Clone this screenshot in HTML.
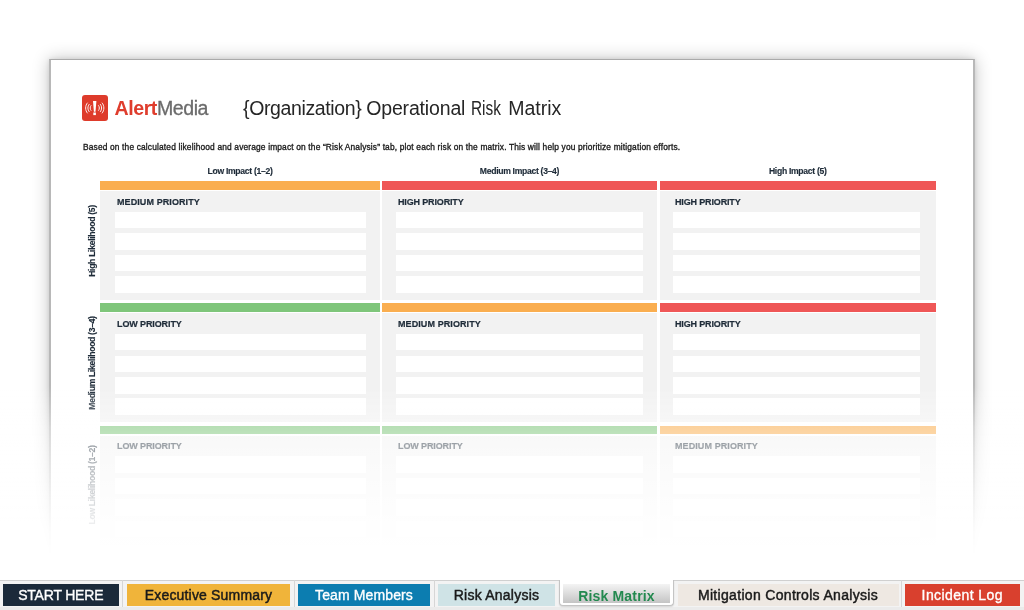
<!DOCTYPE html>
<html><head><meta charset="utf-8">
<style>
html,body{margin:0;padding:0;}
body{-webkit-font-smoothing:antialiased;width:1024px;height:610px;position:relative;overflow:hidden;background:#fff;font-family:"Liberation Sans",sans-serif;}
div{position:absolute;box-sizing:border-box;}
.wrap{left:0;top:0;width:1024px;height:610px;will-change:transform;}
.page{left:49px;top:58.7px;width:926.3px;height:560px;background:#fff;border:2.2px solid #b8b8b8;border-top:1.6px solid #aaa;box-shadow:0 0 5px rgba(0,0,0,0.10), 0 0 16px rgba(0,0,0,0.24);}
.bar{height:8.5px;}
.ttl{top:96px;font-size:19.5px;line-height:24px;white-space:nowrap;color:#262626;}
.gray{background:#F2F2F2;}
.wr{height:16.5px;background:#fff;}
.lbl{font-weight:bold;font-size:9px;line-height:10px;color:#1e2b38;-webkit-text-stroke:0.2px #1e2b38;white-space:nowrap;}
.hdr{font-weight:bold;font-size:8.6px;letter-spacing:-0.3px;line-height:10px;color:#1e2b38;-webkit-text-stroke:0.15px #1e2b38;white-space:nowrap;text-align:center;}
.rl{font-weight:bold;font-size:8.6px;letter-spacing:-0.3px;line-height:10px;color:#1e2b38;-webkit-text-stroke:0.15px #1e2b38;white-space:nowrap;text-align:center;width:120px;transform:rotate(-90deg);transform-origin:center center;}
.fade{left:0;top:380px;width:1024px;height:200px;background:linear-gradient(to bottom, rgba(255,255,255,0) 5px, rgba(255,255,255,0.45) 48px, rgba(255,255,255,0.56) 65px, rgba(255,255,255,0.8) 115px, rgba(255,255,255,0.94) 148px, rgba(255,255,255,1) 178px);}
.tabbar{left:0;top:579.5px;width:1024px;height:31px;background:#f3f3f3;border-top:1.3px solid #d0d0d0;}
.tabbot{left:0;top:607px;width:1024px;height:3px;background:#ebebeb;}
.tab{top:583.5px;height:22.8px;font-size:14px;line-height:22.5px;text-align:center;white-space:nowrap;color:#1a1a1a;-webkit-text-stroke:0.45px currentColor;}
.tw{-webkit-text-stroke:0.35px #fff;}
.sep{top:580px;width:1.4px;height:27px;background:#d6d6d6;}
</style></head><body><div class="wrap">
<div class="page"></div>
<!-- logo -->
<svg style="position:absolute;left:81.8px;top:94.6px" width="26" height="26" viewBox="0 0 26 26"><rect x="0" y="0" width="26" height="26" rx="3" fill="#DE3B2B"/><path d="M11 6.1 L14.4 6.1 L13.5 16.7 L11.9 16.7 Z" fill="#fff"/><rect x="11.3" y="17.5" width="2.6" height="2.6" fill="#fff"/><g fill="none" stroke="#fff" stroke-width="1" opacity="0.92"><path d="M5.6 7.7 C3 10.5 3 15.5 5.6 18.3"/><path d="M7.5 9 C5.4 11.2 5.4 14.8 7.5 17"/><path d="M9.2 10.3 C7.8 11.9 7.8 14.1 9.2 15.7"/><path d="M19.9 7.7 C22.5 10.5 22.5 15.5 19.9 18.3"/><path d="M18 9 C20.1 11.2 20.1 14.8 18 17"/><path d="M16.3 10.3 C17.7 11.9 17.7 14.1 16.3 15.7"/></g></svg>
<div style="left:114.5px;top:97px;font-size:19.6px;line-height:22px;white-space:nowrap;letter-spacing:-0.45px;"><span style="color:#DF3D2D;font-weight:bold">Alert</span><span style="color:#6b6b6b;-webkit-text-stroke:0.3px #6b6b6b">Media</span></div>
<div class="ttl" style="left:243px;letter-spacing:-0.38px;">{Organization}</div><div class="ttl" style="left:366.2px;letter-spacing:-0.16px;">Operational</div><div class="ttl" style="left:471.3px;transform:scaleX(0.79);transform-origin:0 0;">Risk</div><div class="ttl" style="left:508.2px;">Matrix</div>
<div style="left:83px;top:141.8px;font-size:8.4px;line-height:10px;white-space:nowrap;color:#1a1a1a;letter-spacing:0.155px;-webkit-text-stroke:0.32px #1a1a1a;">Based on the calculated likelihood and average impact on the “Risk Analysis” tab, plot each risk on the matrix. This will help you prioritize mitigation efforts.</div>
<div class="hdr" style="left:100px;top:166px;width:280px;">Low Impact (1–2)</div>
<div class="hdr" style="left:382px;top:166px;width:275px;">Medium Impact (3–4)</div>
<div class="hdr" style="left:659.5px;top:166px;width:276.5px;">High Impact (5)</div>
<div class="bar" style="left:100px;top:181px;width:280px;background:#FAAE50"></div>
<div class="gray" style="left:100px;top:191px;width:280px;height:109px"></div>
<div class="lbl" style="left:117px;top:196.8px;letter-spacing:0.09px">MEDIUM PRIORITY</div>
<div class="wr" style="left:114.5px;top:211.6px;width:251.5px"></div>
<div class="wr" style="left:114.5px;top:233.2px;width:251.5px"></div>
<div class="wr" style="left:114.5px;top:254.7px;width:251.5px"></div>
<div class="wr" style="left:114.5px;top:276.1px;width:251.5px"></div>
<div class="bar" style="left:382px;top:181px;width:275px;background:#EF5757"></div>
<div class="gray" style="left:382px;top:191px;width:275px;height:109px"></div>
<div class="lbl" style="left:398px;top:196.8px;letter-spacing:-0.15px">HIGH PRIORITY</div>
<div class="wr" style="left:395.5px;top:211.6px;width:247.5px"></div>
<div class="wr" style="left:395.5px;top:233.2px;width:247.5px"></div>
<div class="wr" style="left:395.5px;top:254.7px;width:247.5px"></div>
<div class="wr" style="left:395.5px;top:276.1px;width:247.5px"></div>
<div class="bar" style="left:659.5px;top:181px;width:276.5px;background:#EF5757"></div>
<div class="gray" style="left:659.5px;top:191px;width:276.5px;height:109px"></div>
<div class="lbl" style="left:675px;top:196.8px;letter-spacing:-0.15px">HIGH PRIORITY</div>
<div class="wr" style="left:672.5px;top:211.6px;width:247.5px"></div>
<div class="wr" style="left:672.5px;top:233.2px;width:247.5px"></div>
<div class="wr" style="left:672.5px;top:254.7px;width:247.5px"></div>
<div class="wr" style="left:672.5px;top:276.1px;width:247.5px"></div>
<div class="bar" style="left:100px;top:303.3px;width:280px;background:#7FC67B"></div>
<div class="gray" style="left:100px;top:313.3px;width:280px;height:109px"></div>
<div class="lbl" style="left:117px;top:319.1px;letter-spacing:-0.11px">LOW PRIORITY</div>
<div class="wr" style="left:114.5px;top:333.90000000000003px;width:251.5px"></div>
<div class="wr" style="left:114.5px;top:355.5px;width:251.5px"></div>
<div class="wr" style="left:114.5px;top:377.0px;width:251.5px"></div>
<div class="wr" style="left:114.5px;top:398.4px;width:251.5px"></div>
<div class="bar" style="left:382px;top:303.3px;width:275px;background:#FAAE50"></div>
<div class="gray" style="left:382px;top:313.3px;width:275px;height:109px"></div>
<div class="lbl" style="left:398px;top:319.1px;letter-spacing:0.09px">MEDIUM PRIORITY</div>
<div class="wr" style="left:395.5px;top:333.90000000000003px;width:247.5px"></div>
<div class="wr" style="left:395.5px;top:355.5px;width:247.5px"></div>
<div class="wr" style="left:395.5px;top:377.0px;width:247.5px"></div>
<div class="wr" style="left:395.5px;top:398.4px;width:247.5px"></div>
<div class="bar" style="left:659.5px;top:303.3px;width:276.5px;background:#EF5757"></div>
<div class="gray" style="left:659.5px;top:313.3px;width:276.5px;height:109px"></div>
<div class="lbl" style="left:675px;top:319.1px;letter-spacing:-0.15px">HIGH PRIORITY</div>
<div class="wr" style="left:672.5px;top:333.90000000000003px;width:247.5px"></div>
<div class="wr" style="left:672.5px;top:355.5px;width:247.5px"></div>
<div class="wr" style="left:672.5px;top:377.0px;width:247.5px"></div>
<div class="wr" style="left:672.5px;top:398.4px;width:247.5px"></div>
<div class="bar" style="left:100px;top:425.6px;width:280px;background:#7FC67B"></div>
<div class="gray" style="left:100px;top:435.6px;width:280px;height:109px"></div>
<div class="lbl" style="left:117px;top:441.40000000000003px;letter-spacing:-0.11px">LOW PRIORITY</div>
<div class="wr" style="left:114.5px;top:456.20000000000005px;width:251.5px"></div>
<div class="wr" style="left:114.5px;top:477.8px;width:251.5px"></div>
<div class="wr" style="left:114.5px;top:499.3px;width:251.5px"></div>
<div class="wr" style="left:114.5px;top:520.7px;width:251.5px"></div>
<div class="bar" style="left:382px;top:425.6px;width:275px;background:#7FC67B"></div>
<div class="gray" style="left:382px;top:435.6px;width:275px;height:109px"></div>
<div class="lbl" style="left:398px;top:441.40000000000003px;letter-spacing:-0.11px">LOW PRIORITY</div>
<div class="wr" style="left:395.5px;top:456.20000000000005px;width:247.5px"></div>
<div class="wr" style="left:395.5px;top:477.8px;width:247.5px"></div>
<div class="wr" style="left:395.5px;top:499.3px;width:247.5px"></div>
<div class="wr" style="left:395.5px;top:520.7px;width:247.5px"></div>
<div class="bar" style="left:659.5px;top:425.6px;width:276.5px;background:#FAAE50"></div>
<div class="gray" style="left:659.5px;top:435.6px;width:276.5px;height:109px"></div>
<div class="lbl" style="left:675px;top:441.40000000000003px;letter-spacing:0.09px">MEDIUM PRIORITY</div>
<div class="wr" style="left:672.5px;top:456.20000000000005px;width:247.5px"></div>
<div class="wr" style="left:672.5px;top:477.8px;width:247.5px"></div>
<div class="wr" style="left:672.5px;top:499.3px;width:247.5px"></div>
<div class="wr" style="left:672.5px;top:520.7px;width:247.5px"></div>
<div class="rl" style="left:32px;top:236px;">High Likelihood (5)</div>
<div class="rl" style="left:32px;top:358.3px;">Medium Likelihood (3–4)</div>
<div class="rl" style="left:32px;top:480px;">Low Likelihood (1–2)</div>
<div class="fade"></div>
<!-- tabs -->
<div class="tabbar"></div><div class="tabbot"></div>
<div class="tab tw" style="left:3px;width:115.5px;background:#1B2A3A;color:#fff;letter-spacing:-0.2px;">START HERE</div>
<div class="sep" style="left:122px;"></div>
<div class="tab" style="left:127px;width:163px;background:#F0B43A;letter-spacing:0.18px;">Executive Summary</div>
<div class="sep" style="left:293.5px;"></div>
<div class="tab tw" style="left:298px;width:132px;background:#0C7DB0;color:#fff;letter-spacing:0.12px;">Team Members</div>
<div class="sep" style="left:434px;"></div>
<div class="tab" style="left:438px;width:117px;background:#CFE3E6;letter-spacing:0.23px;">Risk Analysis</div>
<div style="left:559px;top:579.5px;width:115px;height:26.5px;background:#fff;border:1px solid #c4c4c4;border-top:none;border-radius:0 0 4px 4px;box-shadow:0 1px 1.5px rgba(0,0,0,0.12);"></div><div style="left:559.8px;top:572px;width:113.4px;height:8.8px;background:#fff;"></div>
<div class="tab" style="left:563px;top:583.5px;width:107px;height:19.5px;line-height:24.5px;background:linear-gradient(to bottom,#f4f4f4,#c4c4c4);color:#23894F;font-weight:bold;letter-spacing:0.18px;-webkit-text-stroke:0;">Risk Matrix</div>
<div class="tab" style="left:677.5px;width:221px;background:#EEE8E2;letter-spacing:0.32px;">Mitigation Controls Analysis</div>
<div class="sep" style="left:901px;"></div>
<div class="tab tw" style="left:904.5px;width:115.5px;background:#D9402E;color:#fff;letter-spacing:0.42px;">Incident Log</div>
</div></body></html>
